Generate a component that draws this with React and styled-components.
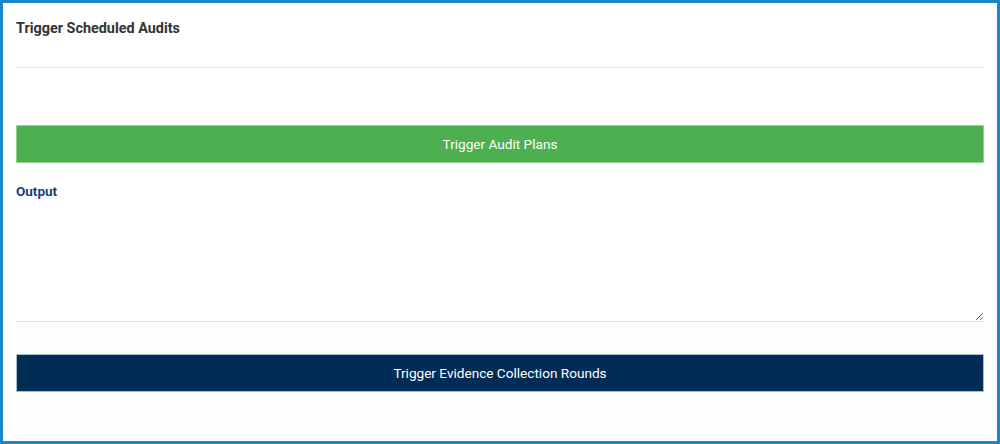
import React from 'react';
import styled, { createGlobalStyle } from 'styled-components';

const GlobalStyle = createGlobalStyle`
  html, body {
    margin: 0;
    padding: 0;
    background: #ffffff;
  }
  body {
    font-family: Roboto, "Liberation Sans", Arial, sans-serif;
  }
  * {
    box-sizing: border-box;
  }
`;

const App = () => (
  <>
    <GlobalStyle />
    <Frame>
      <TopSection>
        <Title>Trigger Scheduled Audits</Title>
        <Divider $gap={57} />
        <ActionButton $variant="green">Trigger Audit Plans</ActionButton>
        <Label htmlFor="output">Output</Label>
        <Output id="output" />
      </TopSection>
      <BottomSection>
        <Divider $gap={32} />
        <ActionButton $variant="navy">Trigger Evidence Collection Rounds</ActionButton>
      </BottomSection>
    </Frame>
  </>
);

const Frame = styled.div`
  height: 444px;
  border: 3px solid #1a87c9;
  display: flex;
  flex-direction: column;
  background: #ffffff;
`;

const TopSection = styled.section`
  display: flex;
  flex-direction: column;
  padding: 0 13px;
`;

const Title = styled.h2`
  margin: 0;
  padding: 16px 0 28px;
  font-size: 14.4px;
  line-height: 20px;
  font-weight: 700;
  color: #333333;
`;

const Divider = styled.hr`
  margin: 0 0 ${(p) => p.$gap}px;
  border: none;
  border-top: 1px solid #e3e3e3;
`;

const variants = {
  green: { bg: '#4caf50', border: '#8fd392' },
  navy: { bg: '#002d56', border: '#a9bccd' },
};

const ActionButton = styled.button`
  display: block;
  width: 100%;
  height: 38px;
  padding: 0;
  border: 1px solid ${(p) => variants[p.$variant].border};
  background: ${(p) => variants[p.$variant].bg};
  color: #ffffff;
  font-family: inherit;
  font-size: 13.6px;
  cursor: pointer;
`;

const Label = styled.label`
  margin-top: 20px;
  font-size: 13.5px;
  line-height: 16px;
  font-weight: 700;
  color: #1e3f78;
`;

const Output = styled.textarea`
  display: block;
  width: 100%;
  height: 122px;
  margin: 0;
  border: none;
  outline: none;
  background: transparent;
  font-family: inherit;
`;

const BottomSection = styled.section`
  flex: 1;
  padding: 0 13px;
  background: #fcfdfd;
`;

export default App;
